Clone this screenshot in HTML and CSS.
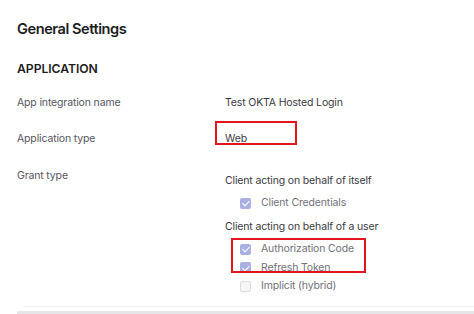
FILE: index.html
```html
<!DOCTYPE html>
<html>
<head>
<meta charset="utf-8">
<link rel="stylesheet" href="styles.css">
</head>
<body>
<div class="page">
  <h1 class="title">General Settings</h1>
  <h2 class="section">APPLICATION</h2>
  <div class="row row-name">
    <div class="label">App integration name</div>
    <div class="value">Test OKTA Hosted Login</div>
  </div>
  <div class="row row-type">
    <div class="label">Application type</div>
    <div class="value annotated">Web<span class="mark mark-web"></span></div>
  </div>
  <div class="row row-grant">
    <div class="label">Grant type</div>
    <div class="value grants">
      <div class="group-title">Client acting on behalf of itself</div>
      <div class="check"><span class="box on"></span>Client Credentials</div>
      <div class="group-title second">Client acting on behalf of a user</div>
      <div class="user-grants">
        <div class="check"><span class="box on"></span>Authorization Code</div>
        <div class="check"><span class="box on"></span>Refresh Token</div>
        <div class="check"><span class="box"></span>Implicit (hybrid)</div>
        <span class="mark mark-grants"></span>
      </div>
    </div>
  </div>
  <div class="rule"></div>
  <div class="bar"></div>
</div>
</body>
</html>
```

FILE: styles.css
```css
html, body {
  margin: 0;
  padding: 0;
  background: #ffffff;
  overflow: hidden;
}
body {
  font-family: Inter, "Noto Sans", sans-serif;
  color: #3a3a40;
}
.page {
  width: 474px;
  height: 314px;
  padding-left: 17px;
  box-sizing: border-box;
  display: flex;
  flex-direction: column;
}
.title {
  margin: 19px 0 0 0;
  font-size: 14.6px;
  line-height: 20px;
  font-weight: 600;
  color: #1d1d21;
  letter-spacing: -0.45px;
}
.section {
  margin: 22px 0 0 0;
  font-size: 12.2px;
  line-height: 16px;
  font-weight: 600;
  color: #1d1d21;
  letter-spacing: -0.05px;
}
.row {
  display: grid;
  grid-template-columns: 208px 1fr;
  font-size: 10.5px;
  line-height: 14px;
  letter-spacing: -0.15px;
}
.row-name { margin-top: 19px; }
.row-type { margin-top: 22px; }
.row-grant { margin-top: 23px; }
.label {
  color: #56565e;
}
.value {
  color: #3a3a40;
}
.annotated {
  position: relative;
}
.mark {
  position: absolute;
  border: 2px solid #e3141c;
  box-sizing: border-box;
}
.mark-web {
  left: -10px;
  top: -11px;
  width: 82px;
  height: 24px;
}
.grants {
  padding-top: 5px;
  display: flex;
  flex-direction: column;
}
.group-title {
  color: #3a3a40;
}
.group-title.second {
  margin-top: 10px;
}
.check {
  display: flex;
  align-items: center;
  gap: 10px;
  margin-left: 15px;
  margin-top: 8px;
  color: #72727a;
}
.user-grants {
  position: relative;
  display: flex;
  flex-direction: column;
}
.user-grants .check { margin-top: 4.5px; }
.user-grants .check:first-child { margin-top: 8px; }
.box {
  width: 11px;
  height: 11px;
  border-radius: 2px;
  box-sizing: border-box;
  border: 1px solid #dcdce0;
  background: #f6f6f8;
  flex: none;
  position: relative;
}
.box.on {
  border: none;
  background: #a9b0e2;
}
.box.on::after {
  content: "";
  position: absolute;
  left: 3.5px;
  top: 1.5px;
  width: 3px;
  height: 6px;
  border-right: 1.6px solid #ffffff;
  border-bottom: 1.6px solid #ffffff;
  transform: rotate(45deg);
}
.mark-grants {
  left: 6px;
  top: 4px;
  width: 135px;
  height: 35px;
}
.rule {
  margin-top: auto;
  margin-left: 7px;
  height: 1px;
  background: #f0f0f2;
}
.bar {
  margin-top: 4px;
  height: 3px;
  background: #e6e6e8;
}
```
